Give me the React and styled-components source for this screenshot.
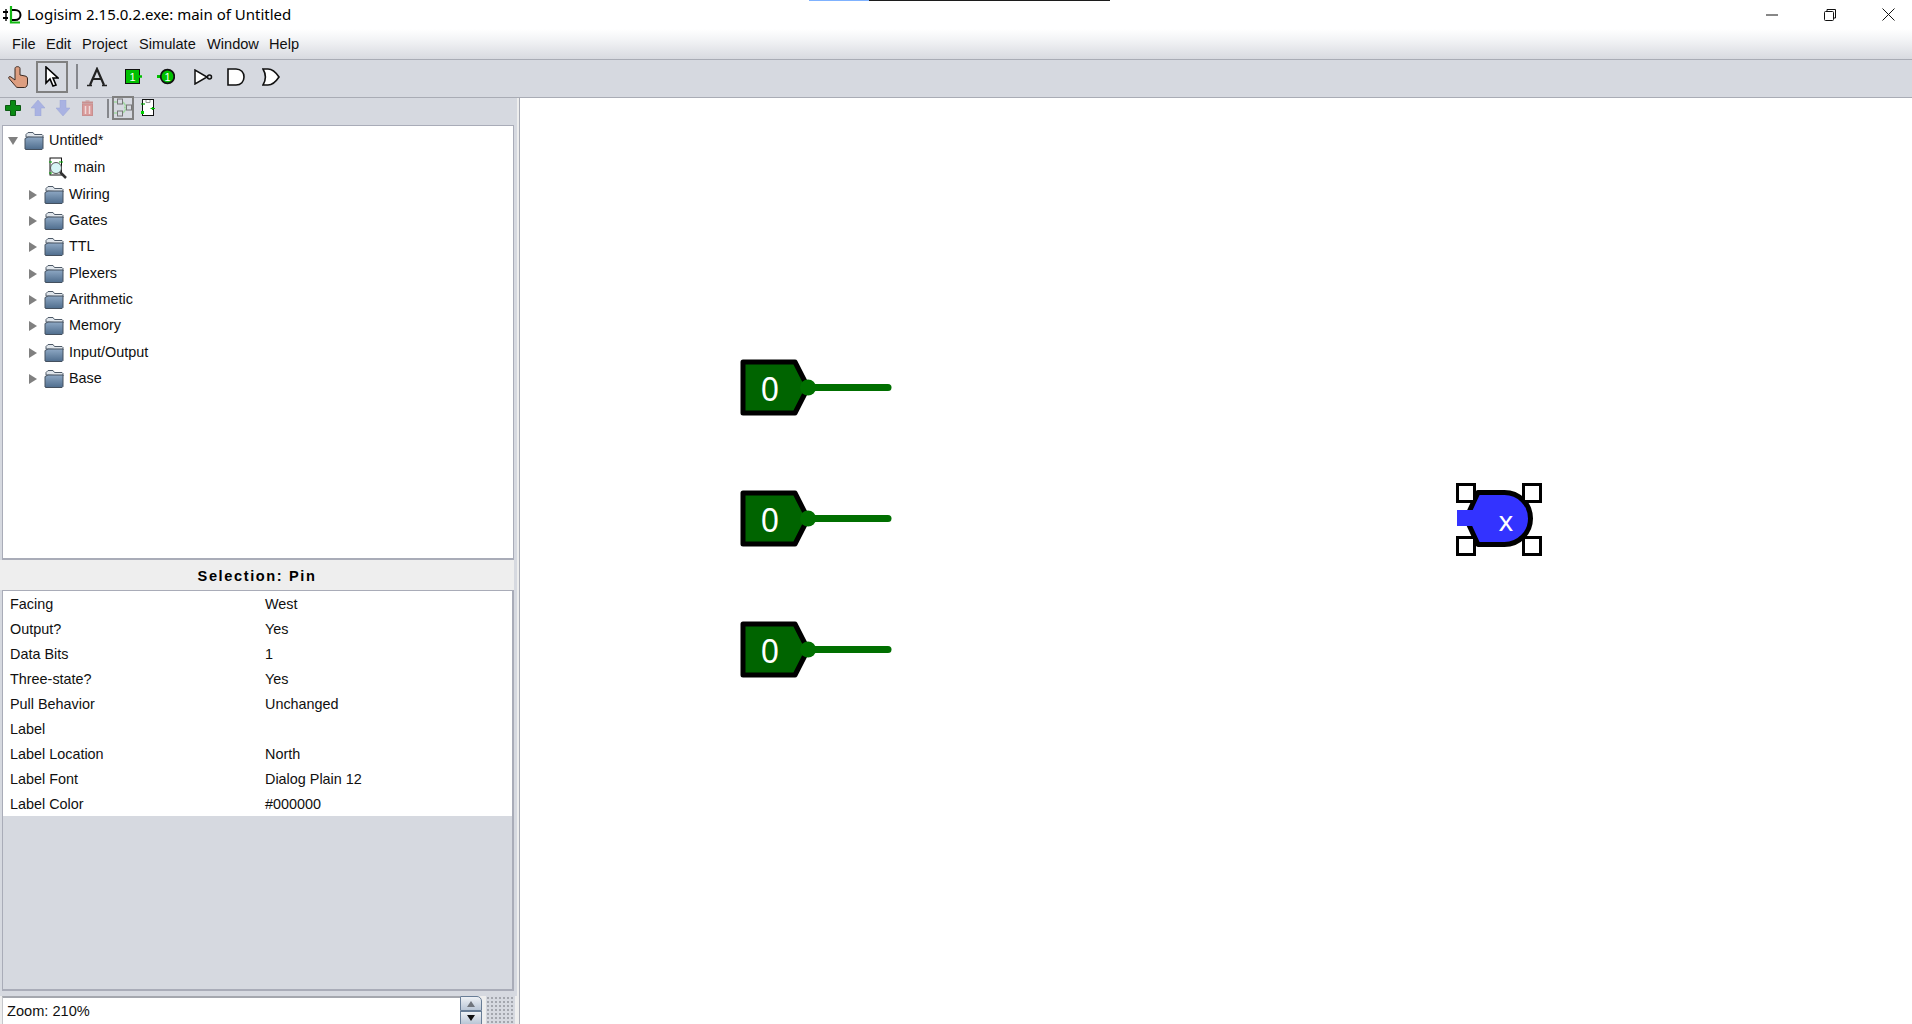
import styled, { createGlobalStyle } from "styled-components";

const GlobalStyle = createGlobalStyle`
  html, body {
    margin: 0;
    padding: 0;
    height: 100%;
    overflow: hidden;
    background: #ffffff;
  }
  * {
    box-sizing: border-box;
  }
`;

const Window = styled.div`
  position: relative;
  width: 1912px;
  height: 1024px;
  display: flex;
  flex-direction: column;
  overflow: hidden;
  font-family: "Liberation Sans", Arial, sans-serif;
  color: #000000;
`;

const TopStrip = styled.div`
  position: absolute;
  top: 0;
  left: 809px;
  width: 301px;
  height: 1px;
  background: linear-gradient(to right, #7fb2ff 0, #7fb2ff 60px, #1c1c1c 60px);
`;

const TitleBar = styled.div`
  height: 29px;
  flex: none;
  display: flex;
  align-items: center;
  background: #ffffff;
`;

const TitleLogo = styled.div`
  width: 21px;
  height: 29px;
  margin-left: 3px;
  display: flex;
  align-items: center;
`;

const TitleText = styled.div`
  font-family: "Noto Sans", "Open Sans", sans-serif;
  font-size: 15px;
  margin-left: 3px;
  padding-bottom: 2px;
  flex: 1;
`;

const WinButton = styled.div`
  width: ${(p) => p.$w}px;
  margin-left: ${(p) => p.$gap || 0}px;
  height: 29px;
  display: flex;
  align-items: center;
  justify-content: center;
`;

const MenuBar = styled.div`
  height: 31px;
  flex: none;
  display: flex;
  align-items: center;
  padding-left: 12px;
  font-size: 14.6px;
  color: #101010;
  background: linear-gradient(to bottom, #ffffff 0%, #f3f4f6 35%, #d8dae0 100%);
  border-bottom: 1px solid #a9acb5;
`;

const MenuItem = styled.div`
  width: ${(p) => p.$w}px;
`;

const MainToolbar = styled.div`
  height: 38px;
  flex: none;
  display: flex;
  align-items: center;
  padding: 0 0 4px 8px;
  background: #d6d9e0;
  border-bottom: 1px solid #a9acb5;
`;

const ToolSlot = styled.div`
  width: ${(p) => p.$w}px;
  height: ${(p) => p.$h || 22}px;
  margin-left: ${(p) => p.$gap || 0}px;
  flex: none;
  display: flex;
  align-items: center;
  justify-content: center;
  border: ${(p) => (p.$active ? "2px solid #808080" : "none")};
`;

const ToolDivider = styled.div`
  width: 2px;
  height: ${(p) => p.$h}px;
  margin-left: ${(p) => p.$gap}px;
  flex: none;
  background: #85878c;
`;

const Body = styled.div`
  flex: 1;
  min-height: 0;
  display: flex;
`;

const LeftColumn = styled.div`
  width: 517px;
  flex: none;
  display: flex;
  flex-direction: column;
  background: #d6d9e0;
`;

const ExplorerToolbar = styled.div`
  height: 27px;
  flex: none;
  display: flex;
  align-items: center;
  padding: 0 0 7px 5px;
`;

const TreePanel = styled.div`
  height: 435px;
  flex: none;
  margin: 0 3px 0 2px;
  background: #ffffff;
  border: 1px solid #a9acb8;
  border-bottom-width: 2px;
`;

const TreeRow = styled.div`
  height: ${(p) => p.$h || 26.3}px;
  display: flex;
  align-items: center;
  font-size: 14.4px;
  color: #101010;
  padding-left: ${(p) => p.$indent}px;
`;

const Toggle = styled.div`
  width: ${(p) => p.$w}px;
  flex: none;
  display: flex;
  align-items: center;
`;

const RowLabel = styled.span`
  margin-left: ${(p) => p.$gap}px;
  position: relative;
  top: -1px;
`;

const SelectionHeader = styled.div`
  height: 30px;
  flex: none;
  display: flex;
  align-items: center;
  justify-content: center;
  background: #eeeeee;
  font-size: 14.6px;
  font-weight: 700;
  letter-spacing: 1.6px;
  margin-right: 3px;
  padding-top: 1px;
`;

const AttrPanel = styled.div`
  height: 401px;
  flex: none;
  margin: 0 3px 0 2px;
  background: #d6d9e0;
  border: 1px solid #a9acb8;
  border-width: 1px 2px 2px 1px;
`;

const AttrRow = styled.div`
  height: 25px;
  display: grid;
  grid-template-columns: 255px 1fr;
  align-items: center;
  background: #ffffff;
  font-size: 14.4px;
  color: #101010;
  padding-left: 7px;
`;

const ZoomBar = styled.div`
  height: 29px;
  flex: none;
  margin-top: 5px;
  display: flex;
  background: #eeeeee;
`;

const ZoomField = styled.div`
  width: 458px;
  margin-left: 2px;
  background: #ffffff;
  border-top: 2px solid #a4a7ae;
  border-left: 1px solid #c5c7cc;
  padding: 0 0 2px 4px;
  font-size: 14.6px;
  color: #101010;
  display: flex;
  align-items: center;
`;

const Spinner = styled.div`
  width: 22px;
  display: flex;
  flex-direction: column;
`;

const SpinButton = styled.div`
  height: ${(p) => p.$h}px;
  display: flex;
  align-items: center;
  justify-content: center;
  border: 1px solid #687d96;
  border-radius: ${(p) => (p.$top ? "0 5px 0 0" : "0")};
  background: linear-gradient(to bottom, #eef1f5, #b9c6d6);
  color: ${(p) => (p.$top ? "#70757c" : "#111111")};
`;

const Grip = styled.div`
  width: 29px;
  margin-left: 4px;
  background-color: #d6d9e0;
  background-image: radial-gradient(#a0a3aa 0.7px, transparent 0.8px);
  background-size: 4px 4px;
`;

const Splitter = styled.div`
  width: 3px;
  flex: none;
  background: #eeeeee;
  border-right: 1px solid #a9acb5;
`;

const Canvas = styled.div`
  flex: 1;
  min-width: 0;
  background: #ffffff;
`;

const CanvasDrawing = styled.svg`
  display: block;
`;

const PinLabel = styled.text`
  font-family: "Noto Sans", "DejaVu Sans", sans-serif;
  fill: #ffffff;
  text-anchor: middle;
`;

const menus = [
  ["File", 34],
  ["Edit", 36],
  ["Project", 57],
  ["Simulate", 68],
  ["Window", 62],
  ["Help", 40],
];

const libraries = ["Wiring", "Gates", "TTL", "Plexers", "Arithmetic", "Memory", "Input/Output", "Base"];

const attributes = [
  ["Facing", "West"],
  ["Output?", "Yes"],
  ["Data Bits", "1"],
  ["Three-state?", "Yes"],
  ["Pull Behavior", "Unchanged"],
  ["Label", ""],
  ["Label Location", "North"],
  ["Label Font", "Dialog Plain 12"],
  ["Label Color", "#000000"],
];

const pinRows = [387.5, 518.5, 649.5];

function AppLogo() {
  return (
    <svg width="19" height="18" viewBox="0 0 19 18" fill="none">
      <path d="M0 6h5M0 12h5" stroke="#000" strokeWidth="1.800" />
      <path d="M3 3v12" stroke="#000" strokeWidth="1.400" />
      <path d="M8 0v16.500h9" stroke="#14b814" strokeWidth="2.200" />
      <path d="M9 4h3c3.500 0 5.500 2.500 5.500 5s-2 5-5.500 5H9" stroke="#000" strokeWidth="2" />
    </svg>
  );
}

function HandIcon() {
  return (
    <svg width="20" height="22" viewBox="0 0 20 22">
      <path
        d="M7 2.500c0-2.500 5-2.500 5 0V9l5 1c1.500.3 2.500 1 2.500 3v4c0 2.500-1 4.500-3 4.500H10c-1.500 0-2.500-1-3-2L1 12.500c-1-1.500.5-2.500 2-1.500l4 3z"
        fill="#dd9e80"
        stroke="#3b2a22"
        strokeWidth="1"
      />
    </svg>
  );
}

function ArrowIcon() {
  return (
    <svg width="14" height="22" viewBox="0 0 14 22">
      <path d="M1 1v16l4-4 3 7 3-1-3-7h5z" fill="#fff" stroke="#000" strokeWidth="1.600" />
    </svg>
  );
}

function TextToolIcon() {
  return (
    <svg width="20" height="20" viewBox="0 0 20 20" fill="none" stroke="#222" strokeWidth="2.200">
      <path d="M3 18L10 2l7 16M5.500 12h9" />
      <path d="M0 18.500h5M15 18.500h5" strokeWidth="1.500" />
    </svg>
  );
}

function InputPinIcon() {
  return (
    <svg width="17" height="16" viewBox="0 0 17 16">
      <rect x="0.500" y="0.500" width="14" height="14" fill="#00c000" stroke="#111" />
      <path d="M14 7.500h3" stroke="#00c000" strokeWidth="2.500" />
      <text x="7.500" y="12" fontSize="11" fontFamily="Liberation Sans" fill="#fff" textAnchor="middle">
        1
      </text>
    </svg>
  );
}

function OutputPinIcon() {
  return (
    <svg width="18" height="17" viewBox="0 0 18 17">
      <path d="M0 8.500h4" stroke="#00c000" strokeWidth="3" />
      <circle cx="10.500" cy="8.500" r="6.800" fill="#00c000" stroke="#111" strokeWidth="1.800" />
      <text x="10.500" y="12.500" fontSize="11" fontFamily="Liberation Sans" fill="#fff" textAnchor="middle">
        1
      </text>
    </svg>
  );
}

function NotGateIcon() {
  return (
    <svg width="19" height="16" viewBox="0 0 19 16" fill="none" stroke="#111" strokeWidth="1.500">
      <path d="M1 1v14L13 8z" fill="#fff" />
      <circle cx="15.500" cy="8" r="2" />
    </svg>
  );
}

function AndGateIcon() {
  return (
    <svg width="19" height="18" viewBox="0 0 19 18">
      <path d="M1 1h8c5 0 8 3.500 8 8s-3 8-8 8H1z" fill="#fff" stroke="#111" strokeWidth="1.600" />
    </svg>
  );
}

function OrGateIcon() {
  return (
    <svg width="19" height="18" viewBox="0 0 19 18">
      <path d="M1 1h5c5 0 8 3.500 11 8-3 4.500-6 8-11 8H1c3-5 3-11 0-16z" fill="#fff" stroke="#111" strokeWidth="1.600" />
    </svg>
  );
}

function PlusIcon() {
  return (
    <svg width="16" height="16" viewBox="0 0 16 16">
      <path d="M5.500.5h5v5h5v5h-5v5h-5v-5h-5v-5h5z" fill="#0a8a14" stroke="#0b5a12" />
    </svg>
  );
}

function MoveIcon({ down }) {
  return (
    <svg width="14" height="16" viewBox="0 0 14 16">
      <path
        d={down ? "M4 0h6v8h4l-7 8-7-8h4z" : "M7 0l7 8h-4v8H4V8H0z"}
        fill="#a9b2e2"
        stroke="#9aa4d6"
        strokeWidth="0.500"
      />
    </svg>
  );
}

function TrashIcon() {
  return (
    <svg width="13" height="16" viewBox="0 0 13 16" fill="none">
      <path d="M1 2.500h11" stroke="#c98f8f" strokeWidth="2" />
      <path d="M4.500 1h4" stroke="#c98f8f" />
      <rect x="1.500" y="4" width="10" height="11.500" fill="#d99a9a" stroke="#c98f8f" />
      <path d="M4.500 6v8M8.500 6v8" stroke="#f0dada" strokeWidth="1.500" />
    </svg>
  );
}

function LayoutIcon() {
  return (
    <svg width="18" height="20" viewBox="0 0 18 20" fill="none">
      <path d="M0 4h4M0 15h4M9 4l3 4M9 15l3-4" stroke="#a3d6a3" strokeWidth="1.500" />
      <path d="M10 9.500h3" stroke="#a3d6a3" strokeWidth="2" />
      <rect x="3.500" y="1" width="5" height="5" stroke="#777" />
      <rect x="3.500" y="13" width="5" height="5" stroke="#777" />
      <rect x="12.500" y="7" width="5" height="5" stroke="#777" />
    </svg>
  );
}

function AppearanceIcon() {
  return (
    <svg width="14" height="18" viewBox="0 0 14 18">
      <rect x="1.500" y="0.500" width="11" height="16" fill="#fff" stroke="#111" />
      <path d="M5 1v2.500h4V1" fill="none" stroke="#999" />
      <path d="M0 5h4" stroke="#00a000" strokeWidth="1.200" />
      <path d="M9.500 9.500h4.500M11.500 8v3" stroke="#00c000" strokeWidth="1.200" />
      <rect x="0" y="12" width="3" height="3" fill="#00d000" />
    </svg>
  );
}

function ExpandArrow({ open }) {
  return (
    <svg width="10" height="10" viewBox="0 0 10 10">
      <path d={open ? "M0 1h10L5 9z" : "M1 0v10l8-5z"} fill="#808080" />
    </svg>
  );
}

function FolderIcon() {
  return (
    <svg width="20" height="20" viewBox="0 0 20 20">
      <defs>
        <linearGradient id="folderFill" x1="0" y1="0" x2="0" y2="1">
          <stop offset="0" stopColor="#8ea8c4" />
          <stop offset="1" stopColor="#4f6d8d" />
        </linearGradient>
      </defs>
      <path d="M2 6V3.500L4 1.500h5l1.500 2H18l1 1V7z" fill="#dfe5eb" stroke="#4e5a68" />
      <path d="M1 18V7.500L4 6h15v11.500l-1 1H2z" fill="url(#folderFill)" stroke="#44505e" />
    </svg>
  );
}

function CircuitMagnifierIcon() {
  return (
    <svg width="19" height="23" viewBox="0 0 19 23" fill="none">
      <rect x="1" y="1" width="11.500" height="17" fill="#fff" stroke="#111" />
      <circle cx="7" cy="11" r="5.500" fill="#d6f5f5" stroke="#555" />
      <path d="M0 5h3M0 16h3M10 5h4" stroke="#00b000" strokeWidth="1.200" />
      <path d="M11 15l6 6" stroke="#333" strokeWidth="2.500" />
    </svg>
  );
}

function InputPin({ y }) {
  return (
    <g>
      <path
        d={`M223 ${y - 25.5}H275L288 ${y}L275 ${y + 25.5}H223Z`}
        fill="#006400"
        stroke="#000"
        strokeWidth="5"
        strokeLinejoin="round"
      />
      <path d={`M288 ${y}H368`} stroke="#006f00" strokeWidth="7" strokeLinecap="round" />
      <circle cx="288" cy={y} r="8" fill="#006f00" />
      <PinLabel x="250" y={y + 13} fontSize="32">
        0
      </PinLabel>
    </g>
  );
}

function Handle({ x, y }) {
  return <rect x={x} y={y} width="17" height="17" fill="#fff" stroke="#000" strokeWidth="3" />;
}

function OutputPin() {
  return (
    <g>
      <path
        d="M958 492.500H984.500A26 26 0 0 1 984.500 544.500H958L946 518.500Z"
        fill="#3333ff"
        stroke="#000"
        strokeWidth="5"
        strokeLinejoin="round"
      />
      <rect x="937" y="510" width="18" height="16" fill="#3333ff" />
      <PinLabel x="986" y="531" fontSize="28">
        x
      </PinLabel>
      <Handle x="937.500" y="484.500" />
      <Handle x="1003.500" y="484.500" />
      <Handle x="937.500" y="537.500" />
      <Handle x="1003.500" y="537.500" />
    </g>
  );
}

export default function App() {
  return (
    <Window>
      <GlobalStyle />
      <TopStrip />
      <TitleBar>
        <TitleLogo>
          <AppLogo />
        </TitleLogo>
        <TitleText>Logisim 2.15.0.2.exe: main of Untitled</TitleText>
        <WinButton $w={58}>
          <svg width="12" height="2" viewBox="0 0 12 2">
            <path d="M0 1h12" stroke="#111" strokeWidth="1" />
          </svg>
        </WinButton>
        <WinButton $w={58}>
          <svg width="12" height="12" viewBox="0 0 12 12" fill="none" stroke="#111">
            <rect x="0.500" y="2.500" width="9" height="9" rx="1" />
            <path d="M3 2.500V.5h8.500V9H9.500" />
          </svg>
        </WinButton>
        <WinButton $w={48} $gap={5}>
          <svg width="13" height="13" viewBox="0 0 13 13" stroke="#111">
            <path d="M.5.500l12 12M12.500.5l-12 12" />
          </svg>
        </WinButton>
      </TitleBar>

      <MenuBar>
        {menus.map(([name, w]) => (
          <MenuItem key={name} $w={w}>
            {name}
          </MenuItem>
        ))}
      </MenuBar>

      <MainToolbar>
        <ToolSlot $w={20}>
          <HandIcon />
        </ToolSlot>
        <ToolSlot $w={32} $h={32} $gap={8} $active>
          <ArrowIcon />
        </ToolSlot>
        <ToolDivider $h={25} $gap={8} />
        <ToolSlot $w={20} $gap={9}>
          <TextToolIcon />
        </ToolSlot>
        <ToolSlot $w={18} $gap={17}>
          <InputPinIcon />
        </ToolSlot>
        <ToolSlot $w={20} $gap={14}>
          <OutputPinIcon />
        </ToolSlot>
        <ToolSlot $w={19} $gap={18}>
          <NotGateIcon />
        </ToolSlot>
        <ToolSlot $w={19} $gap={14}>
          <AndGateIcon />
        </ToolSlot>
        <ToolSlot $w={19} $gap={16}>
          <OrGateIcon />
        </ToolSlot>
      </MainToolbar>

      <Body>
        <LeftColumn>
          <ExplorerToolbar>
            <ToolSlot $w={16}>
              <PlusIcon />
            </ToolSlot>
            <ToolSlot $w={14} $gap={10}>
              <MoveIcon />
            </ToolSlot>
            <ToolSlot $w={14} $gap={11}>
              <MoveIcon down />
            </ToolSlot>
            <ToolSlot $w={13} $gap={11}>
              <TrashIcon />
            </ToolSlot>
            <ToolDivider $h={19} $gap={13} />
            <ToolSlot $w={22} $h={24} $gap={3} $active>
              <LayoutIcon />
            </ToolSlot>
            <ToolSlot $w={14} $gap={7}>
              <AppearanceIcon />
            </ToolSlot>
          </ExplorerToolbar>

          <TreePanel>
            <TreeRow $indent={5} $h={29}>
              <Toggle $w={16}>
                <ExpandArrow open />
              </Toggle>
              <FolderIcon />
              <RowLabel $gap={5}>Untitled*</RowLabel>
            </TreeRow>
            <TreeRow $indent={46} $h={26.6}>
              <CircuitMagnifierIcon />
              <RowLabel $gap={6}>main</RowLabel>
            </TreeRow>
            {libraries.map((name) => (
              <TreeRow key={name} $indent={25}>
                <Toggle $w={16}>
                  <ExpandArrow />
                </Toggle>
                <FolderIcon />
                <RowLabel $gap={5}>{name}</RowLabel>
              </TreeRow>
            ))}
          </TreePanel>

          <SelectionHeader>Selection: Pin</SelectionHeader>

          <AttrPanel>
            {attributes.map(([label, value]) => (
              <AttrRow key={label}>
                <span>{label}</span>
                <span>{value}</span>
              </AttrRow>
            ))}
          </AttrPanel>

          <ZoomBar>
            <ZoomField>Zoom: 210%</ZoomField>
            <Spinner>
              <SpinButton $top $h={15}>
                <svg width="8" height="6" viewBox="0 0 8 6">
                  <path d="M0 6h8L4 0z" fill="currentColor" />
                </svg>
              </SpinButton>
              <SpinButton $h={14}>
                <svg width="8" height="6" viewBox="0 0 8 6">
                  <path d="M0 0h8L4 6z" fill="currentColor" />
                </svg>
              </SpinButton>
            </Spinner>
            <Grip />
          </ZoomBar>
        </LeftColumn>

        <Splitter />

        <Canvas>
          <CanvasDrawing width="1392" height="926" viewBox="520 98 1392 926">
            <g transform="translate(520 0)">
              {pinRows.map((y) => (
                <InputPin key={y} y={y} />
              ))}
              <OutputPin />
            </g>
          </CanvasDrawing>
        </Canvas>
      </Body>
    </Window>
  );
}
